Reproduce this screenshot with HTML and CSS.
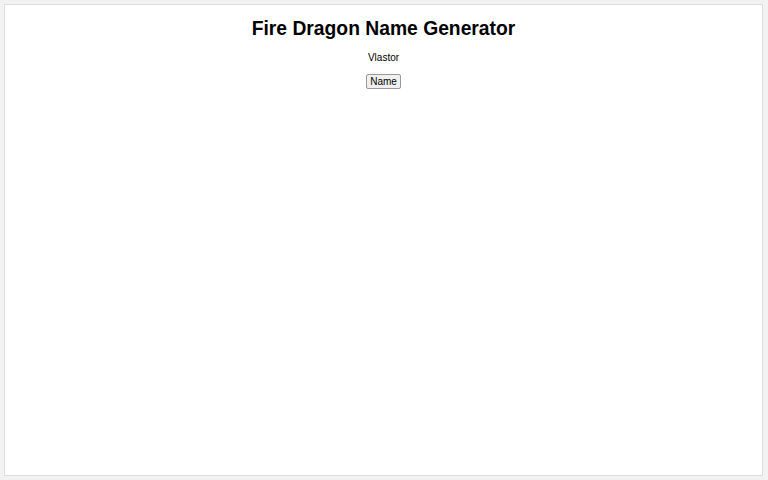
FILE: index.html
```html
<!DOCTYPE html>
<html lang="en">
<head>
    <meta charset="UTF-8">
    <meta name="viewport" content="width=device-width, initial-scale=1.0">
    <title>Fire Dragon Name Generator</title>
    <link rel="stylesheet" href="styles.css">
</head>
<body>
    <div class="container">
        <h1>Fire Dragon Name Generator</h1>
        <p class="result" id="result">Vlastor</p>
        <button class="name-button" onclick="generateName()">Name</button>
    </div>

    <script>
        const names = ['Vlastor', 'Ignaroth', 'Pyrrhax', 'Cindrel', 'Scorvath', 'Emberis', 'Drakthar'];

        function generateName() {
            const pick = names[Math.floor(Math.random() * names.length)];
            document.getElementById('result').innerText = pick;
        }
    </script>
</body>
</html>
```

FILE: styles.css
```css
body {
    margin: 0;
    padding: 4px 5px 4px 4px;
    background-color: #f2f2f2;
    font-family: "Liberation Sans", Arial, sans-serif;
}
.container {
    height: 470px;
    background-color: #fff;
    border: 1px solid #ddd;
    display: flex;
    flex-direction: column;
    align-items: center;
}
h1 {
    font-size: 19.3px;
    margin: 13px 0 0;
    line-height: 22px;
}
.result {
    font-size: 10px;
    line-height: 12px;
    margin: 12px 0 0;
}
.name-button {
    margin-top: 10px;
    height: 15px;
    font-family: "Liberation Sans", Arial, sans-serif;
    font-size: 10px;
    padding: 0 3px;
    background-color: #f0f0f0;
    border: 1px solid #999;
    border-radius: 2px;
}
```
